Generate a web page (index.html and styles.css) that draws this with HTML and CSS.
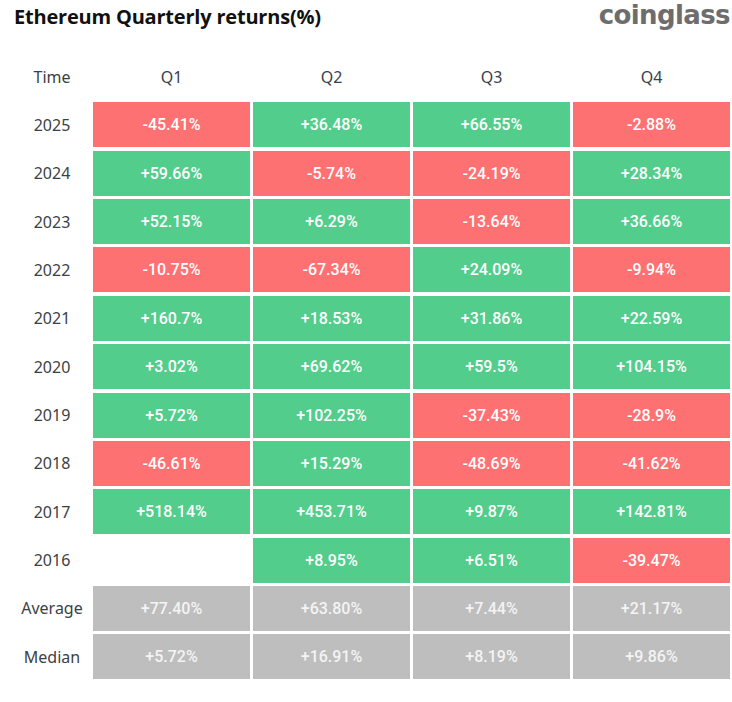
FILE: index.html
```html
<!DOCTYPE html>
<html>
<head>
<meta charset="utf-8">
<link rel="stylesheet" href="styles.css">
</head>
<body>
<div class="page">
  <div class="top">
    <div class="title">Ethereum Quarterly returns(%)</div>
    <div class="logo">coinglass</div>
  </div>
  <div class="table">
    <div class="lbl">Time</div><div class="hd">Q1</div><div class="hd">Q2</div><div class="hd">Q3</div><div class="hd">Q4</div>
    <div class="lbl">2025</div><div class="c r">-45.41%</div><div class="c g">+36.48%</div><div class="c g">+66.55%</div><div class="c r">-2.88%</div>
    <div class="lbl">2024</div><div class="c g">+59.66%</div><div class="c r">-5.74%</div><div class="c r">-24.19%</div><div class="c g">+28.34%</div>
    <div class="lbl">2023</div><div class="c g">+52.15%</div><div class="c g">+6.29%</div><div class="c r">-13.64%</div><div class="c g">+36.66%</div>
    <div class="lbl">2022</div><div class="c r">-10.75%</div><div class="c r">-67.34%</div><div class="c g">+24.09%</div><div class="c r">-9.94%</div>
    <div class="lbl">2021</div><div class="c g">+160.7%</div><div class="c g">+18.53%</div><div class="c g">+31.86%</div><div class="c g">+22.59%</div>
    <div class="lbl">2020</div><div class="c g">+3.02%</div><div class="c g">+69.62%</div><div class="c g">+59.5%</div><div class="c g">+104.15%</div>
    <div class="lbl">2019</div><div class="c g">+5.72%</div><div class="c g">+102.25%</div><div class="c r">-37.43%</div><div class="c r">-28.9%</div>
    <div class="lbl">2018</div><div class="c r">-46.61%</div><div class="c g">+15.29%</div><div class="c r">-48.69%</div><div class="c r">-41.62%</div>
    <div class="lbl">2017</div><div class="c g">+518.14%</div><div class="c g">+453.71%</div><div class="c g">+9.87%</div><div class="c g">+142.81%</div>
    <div class="lbl">2016</div><div class="c"></div><div class="c g">+8.95%</div><div class="c g">+6.51%</div><div class="c r">-39.47%</div>
    <div class="lbl">Average</div><div class="c n">+77.40%</div><div class="c n">+63.80%</div><div class="c n">+7.44%</div><div class="c n">+21.17%</div>
    <div class="lbl">Median</div><div class="c n">+5.72%</div><div class="c n">+16.91%</div><div class="c n">+8.19%</div><div class="c n">+9.86%</div>
  </div>
</div>
</body>
</html>
```

FILE: styles.css
```css
html, body {
  margin: 0;
  padding: 0;
  background: #ffffff;
}
.page {
  width: 732px;
  height: 702px;
  box-sizing: border-box;
  padding-left: 14px;
}
.top {
  display: flex;
  justify-content: space-between;
  align-items: flex-start;
  height: 54px;
}
.title {
  font-family: "Open Sans", "Noto Sans", sans-serif;
  font-weight: 700;
  font-size: 20px;
  letter-spacing: -0.2px;
  color: #111111;
  line-height: 24px;
  margin-top: 5px;
}
.logo {
  font-family: "DejaVu Sans", sans-serif;
  font-weight: 700;
  font-size: 26px;
  letter-spacing: -0.6px;
  color: #6d6d6d;
  line-height: 30px;
  margin-top: 0;
  margin-right: 2px;
}
.table {
  display: grid;
  grid-template-columns: 76px repeat(4, 157px);
  grid-auto-rows: 45px;
  column-gap: 3px;
  row-gap: 3.36px;
}
.lbl, .hd {
  font-family: "Noto Sans", sans-serif;
  font-size: 16px;
  color: #3b3f46;
  display: flex;
  align-items: center;
  justify-content: center;
}
.c {
  font-family: "Roboto", sans-serif;
  font-weight: 500;
  font-size: 16px;
  color: #ffffff;
  display: flex;
  align-items: center;
  justify-content: center;
}
.r { background: #fe7172; }
.g { background: #52cd8b; }
.n { background: #bebebe; color: #f4f4f4; }
```
